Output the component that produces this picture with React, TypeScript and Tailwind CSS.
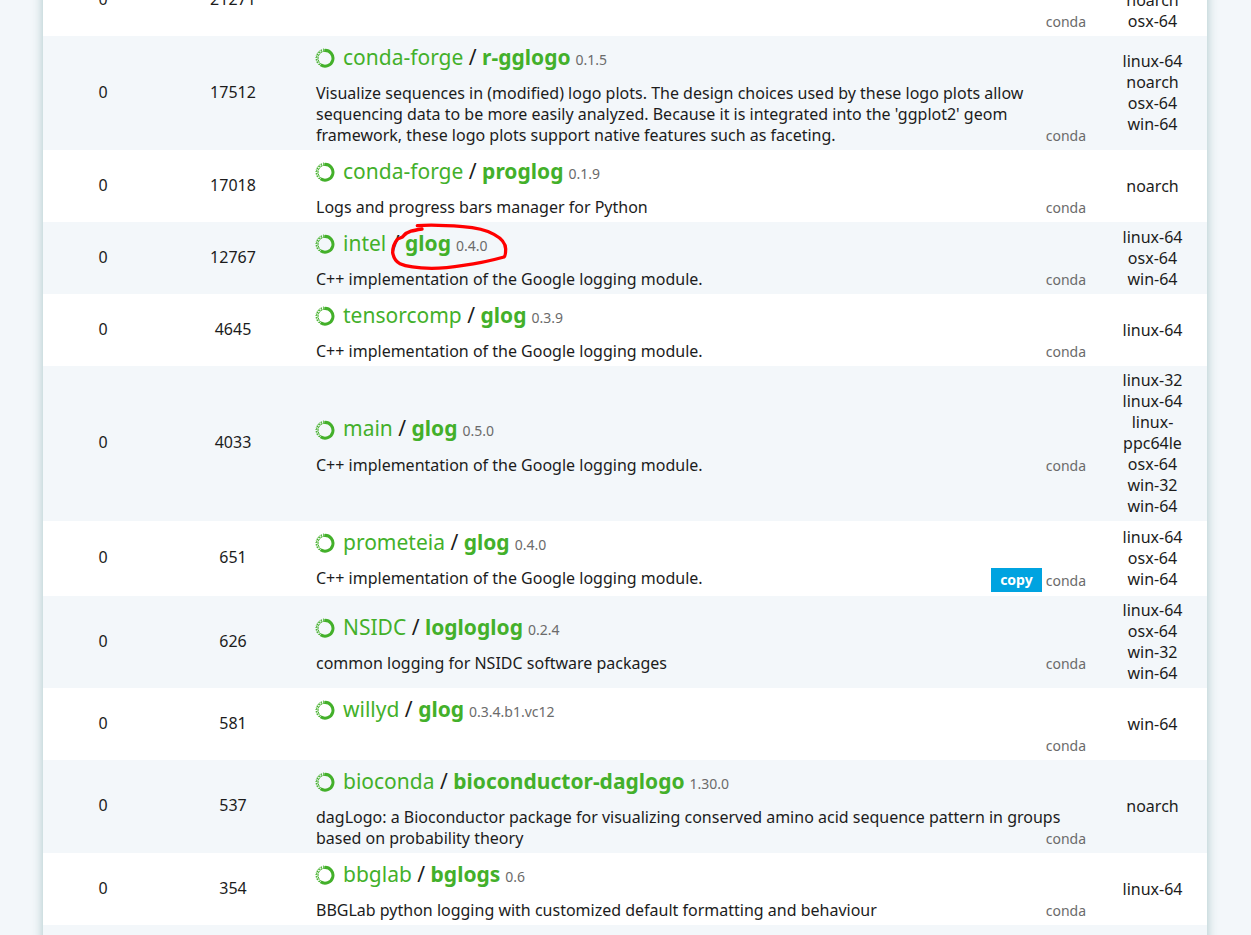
type Pkg = {
  favorites: number;
  downloads: number;
  owner?: string;
  name?: string;
  version?: string;
  summary: string[];
  platforms: string[];
  copy?: boolean;
  circled?: boolean;
};

const GLOG = 'C++ implementation of the Google logging module.';

const packages: Pkg[] = [
  { favorites: 0, downloads: 21271, summary: [], platforms: ['linux-64', 'noarch', 'osx-64'] },
  {
    favorites: 0,
    downloads: 17512,
    owner: 'conda-forge',
    name: 'r-gglogo',
    version: '0.1.5',
    summary: [
      'Visualize sequences in (modified) logo plots. The design choices used by these logo plots allow',
      "sequencing data to be more easily analyzed. Because it is integrated into the 'ggplot2' geom",
      'framework, these logo plots support native features such as faceting.',
    ],
    platforms: ['linux-64', 'noarch', 'osx-64', 'win-64'],
  },
  { favorites: 0, downloads: 17018, owner: 'conda-forge', name: 'proglog', version: '0.1.9', summary: ['Logs and progress bars manager for Python'], platforms: ['noarch'] },
  { favorites: 0, downloads: 12767, owner: 'intel', name: 'glog', version: '0.4.0', summary: [GLOG], platforms: ['linux-64', 'osx-64', 'win-64'], circled: true },
  { favorites: 0, downloads: 4645, owner: 'tensorcomp', name: 'glog', version: '0.3.9', summary: [GLOG], platforms: ['linux-64'] },
  { favorites: 0, downloads: 4033, owner: 'main', name: 'glog', version: '0.5.0', summary: [GLOG], platforms: ['linux-32', 'linux-64', 'linux-ppc64le', 'osx-64', 'win-32', 'win-64'] },
  { favorites: 0, downloads: 651, owner: 'prometeia', name: 'glog', version: '0.4.0', summary: [GLOG], platforms: ['linux-64', 'osx-64', 'win-64'], copy: true },
  { favorites: 0, downloads: 626, owner: 'NSIDC', name: 'logloglog', version: '0.2.4', summary: ['common logging for NSIDC software packages'], platforms: ['linux-64', 'osx-64', 'win-32', 'win-64'] },
  { favorites: 0, downloads: 581, owner: 'willyd', name: 'glog', version: '0.3.4.b1.vc12', summary: [], platforms: ['win-64'] },
  {
    favorites: 0,
    downloads: 537,
    owner: 'bioconda',
    name: 'bioconductor-daglogo',
    version: '1.30.0',
    summary: ['dagLogo: a Bioconductor package for visualizing conserved amino acid sequence pattern in groups', 'based on probability theory'],
    platforms: ['noarch'],
  },
  { favorites: 0, downloads: 354, owner: 'bbglab', name: 'bglogs', version: '0.6', summary: ['BBGLab python logging with customized default formatting and behaviour'], platforms: ['linux-64'] },
];

function CondaIcon() {
  return (
    <svg className="-ml-px size-5 shrink-0" viewBox="0 0 20 20" fill="none" stroke="#43b02a" aria-hidden="true">
      <path d="M9.5 2.4A7.9 7.9 0 1 1 5.6 16.8" strokeWidth="3" />
      <path d="M10 3.3A6.9 6.9 0 0 0 6.2 16" strokeWidth="1" strokeDasharray="2.6 0.5" />
      <path d="M9.6 2.1A8.1 8.1 0 0 0 5.4 17" strokeWidth="1.4" strokeDasharray="1.5 1.1" />
      <path d="M9 1A9.2 9.2 0 0 0 3.6 16.6" strokeWidth="1" strokeDasharray="1.1 1.3" />
    </svg>
  );
}

function RedCircle() {
  return (
    <svg className="pointer-events-none absolute -top-[11px] left-16 h-[65px] w-[140px]" viewBox="0 0 420 195" fill="none" aria-hidden="true">
      <path
        d="M112 32C160 28 200 31 248 35C290 38 315 43 342 58C366 71 377 87 377 102C377 116 375 124 372 126C340 135 290 146 250 151C215 157 185 160 155 160C115 159 80 155 60 146C43 138 40 124 38 113C38 96 43 84 52 73C60 68 66 69 71 62C82 49 100 46 126 42"
        stroke="#f00"
        strokeWidth="10"
        strokeLinecap="round"
        strokeLinejoin="round"
      />
    </svg>
  );
}

function PackageRow({ pkg }: { pkg: Pkg }) {
  return (
    <tr className="odd:bg-white even:bg-[#f3f7fa]">
      <td className="pt-[3px] pb-[5px] text-center">{pkg.favorites}</td>
      <td className="pt-[3px] pb-[5px] text-center">{pkg.downloads}</td>
      <td className="py-1 pr-3 pl-[13px]">
        <div className="relative flex h-9 items-center text-[21px]">
          {pkg.owner && (
            <>
              <CondaIcon />
              <span className="ml-2 whitespace-pre">
                <a href="#" className="text-[#43b02a]">{pkg.owner}</a>
                {' / '}
                <a href="#" className="font-bold text-[#43b02a]">{pkg.name}</a>
                <small className="ml-[5px] text-sm text-[#6b6b6b]">{pkg.version}</small>
              </span>
            </>
          )}
          {pkg.circled && <RedCircle />}
        </div>
        <div className="mt-[7px] flex items-start justify-between">
          <p className="w-0 grow whitespace-nowrap font-[450]">
            {pkg.summary.map((line) => (
              <span key={line} className="block">{line}</span>
            ))}
          </p>
          <div className="flex items-center gap-1 self-end text-sm leading-[21px] text-[#6b6b6b]">
            {pkg.copy && (
              <button type="button" className="h-6 bg-[#00a3e0] px-[9px] text-sm font-bold text-white">copy</button>
            )}
            <span>conda</span>
          </div>
        </div>
      </td>
      <td className="px-3 py-1 text-center font-[450]">
        {pkg.platforms.map((platform) => (
          <div key={platform}>{platform}</div>
        ))}
      </td>
    </tr>
  );
}

export default function App() {
  return (
    <div className="flex min-h-screen overflow-hidden bg-[#f3f7fa] pr-11 pl-[43px] font-['Noto_Sans',sans-serif] text-base leading-[21px] text-[#1c1c1c]">
      <main className="-my-4 grow bg-[#f3f7fa] py-4 shadow-[0_0_10px_#a9c5c7]">
        <table className="-mt-9 w-full table-fixed">
          <colgroup>
            <col className="w-[120px]" />
            <col className="w-[140px]" />
            <col />
            <col className="w-[109px]" />
          </colgroup>
          <tbody>
            {packages.map((pkg) => (
              <PackageRow key={pkg.downloads} pkg={pkg} />
            ))}
          </tbody>
        </table>
      </main>
    </div>
  );
}
